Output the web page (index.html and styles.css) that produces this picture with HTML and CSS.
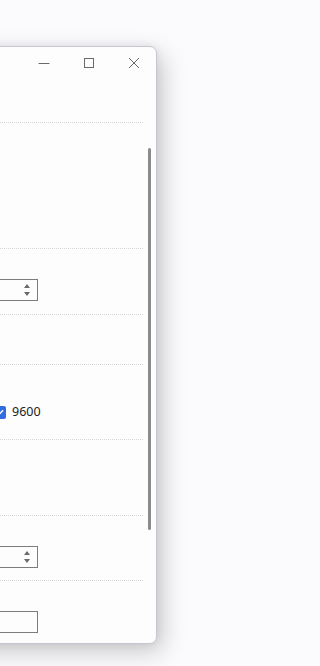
FILE: index.html
```html
<!DOCTYPE html>
<html>
<head>
<meta charset="utf-8">
<link rel="stylesheet" href="styles.css">
</head>
<body>
<div class="window">
  <div class="titlebar">
    <div class="tb-btn">
      <svg width="12" height="12" viewBox="0 0 12 12"><path d="M0.5 6.5h11" stroke="#6a6a6a" stroke-width="1" fill="none"/></svg>
    </div>
    <div class="tb-btn">
      <svg width="12" height="12" viewBox="0 0 12 12"><rect x="1.5" y="1.5" width="9" height="9" stroke="#6a6a6a" stroke-width="1" fill="none"/></svg>
    </div>
    <div class="tb-btn">
      <svg width="12" height="12" viewBox="0 0 12 12"><path d="M1 1l10 10M11 1L1 11" stroke="#6a6a6a" stroke-width="1" fill="none"/></svg>
    </div>
  </div>
  <div class="content">
    <div class="sec s0"></div>
    <div class="sec s1"></div>
    <div class="sec s2">
      <div class="spin">
        <span class="arrows"><span class="up"></span><span class="down"></span></span>
      </div>
    </div>
    <div class="sec s3"></div>
    <div class="sec s4">
      <div class="check-row">
        <span class="checkbox">
          <svg width="13" height="13" viewBox="0 0 13 13"><path d="M3 6.8l2.4 2.4L10 4.2" stroke="#fff" stroke-width="1.4" fill="none"/></svg>
        </span>
        <span class="check-label">9600</span>
      </div>
    </div>
    <div class="sec s5"></div>
    <div class="sec s6">
      <div class="spin">
        <span class="arrows"><span class="up"></span><span class="down"></span></span>
      </div>
    </div>
    <div class="sec s7 last">
      <div class="textbox"></div>
    </div>
  </div>
  <div class="scrollbar"></div>
</div>
</body>
</html>
```
FILE: styles.css
```css
html, body {
  margin: 0;
  padding: 0;
  background: #fbfbfd;
  overflow: hidden;
  font-family: "Noto Sans", "Open Sans", sans-serif;
}
body {
  width: 320px;
  height: 666px;
}
.window {
  position: relative;
  margin-top: 46px;
  margin-left: -143px;
  width: 298px;
  height: 596px;
  border: 1px solid #c6c6d0;
  border-radius: 7px;
  background: #fdfdfe;
  box-shadow: 6px 8px 24px rgba(0, 0, 0, 0.2), 0 0 10px rgba(0, 0, 0, 0.07);
}
.titlebar {
  display: flex;
  justify-content: flex-end;
  height: 32px;
}
.tb-btn {
  width: 45px;
  height: 32px;
  display: flex;
  align-items: center;
  justify-content: center;
}
.content {
  padding-right: 13px;
}
.sec {
  border-bottom: 1px dotted #d6d6da;
  display: flex;
  align-items: flex-start;
}
.sec.last { border-bottom: none; }
.s0 { height: 43px; }
.s1 { height: 125px; }
.s2 { height: 65px; }
.s3 { height: 49px; }
.s4 { height: 74px; }
.s5 { height: 75px; }
.s6 { height: 64px; }
.s7 { height: 62px; }

.spin, .textbox {
  box-sizing: border-box;
  width: 100px;
  height: 22px;
  margin-left: 80px;
  border: 1px solid #7c7c7c;
  background: #fdfdfe;
  display: flex;
  justify-content: flex-end;
  align-items: center;
}
.s2 .spin { margin-top: 30px; }
.s6 .spin { margin-top: 30px; }
.s7 .textbox { margin-top: 30px; }

.arrows {
  display: flex;
  flex-direction: column;
  gap: 4px;
  margin-right: 7px;
}
.up {
  width: 0; height: 0;
  border-left: 3.5px solid transparent;
  border-right: 3.5px solid transparent;
  border-bottom: 4px solid #6a6a6a;
}
.down {
  width: 0; height: 0;
  border-left: 3.5px solid transparent;
  border-right: 3.5px solid transparent;
  border-top: 4px solid #6a6a6a;
}

.check-row {
  display: flex;
  align-items: center;
  margin-top: 40px;
  margin-left: 135px;
  gap: 6px;
}
.checkbox {
  width: 13px;
  height: 13px;
  border-radius: 2px;
  background: #2f6de1;
  display: flex;
}
.check-label {
  font-size: 12.5px;
  color: #1c1c1c;
  line-height: 14px;
}

.scrollbar {
  position: absolute;
  right: 5px;
  top: 101px;
  width: 3px;
  height: 382px;
  border-radius: 1.5px;
  background: #8a8a8a;
}
```
